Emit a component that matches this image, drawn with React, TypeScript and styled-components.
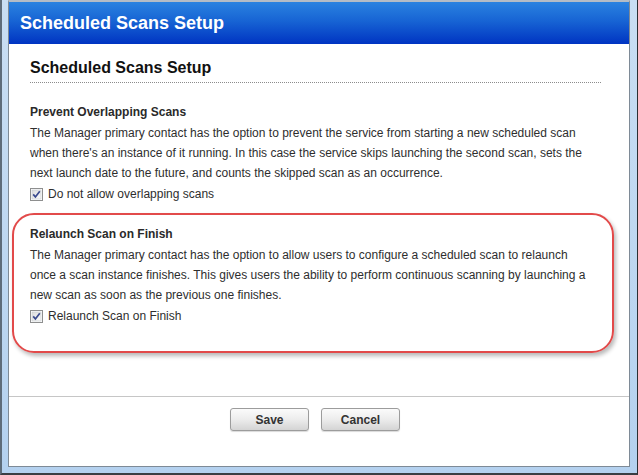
import styled, { createGlobalStyle } from 'styled-components';

const GlobalStyle = createGlobalStyle`
  html, body {
    margin: 0;
    padding: 0;
    background: #ffffff;
  }
  body {
    font-family: "Liberation Sans", Arial, sans-serif;
  }
`;

// window chrome
const Frame = styled.div`
  width: 638px;
  height: 475px;
  box-sizing: border-box;
  background: linear-gradient(to bottom, #c9def3, #b4d1ef);
  border-left: 2px solid #5e6c7a;
  border-right: 1px solid #2c2f33;
  border-bottom: 2px solid #3a3d42;
  padding: 0 7px 6px 6px;
  display: flex;
  flex-direction: column;
`;

const Dialog = styled.div`
  flex: 1;
  display: flex;
  flex-direction: column;
  background: #fff;
  border-top: 2px solid #b3bcc6;
  border-left: 1px solid #7e8a96;
  border-right: 1px solid #7e8a96;
  border-bottom: 1px solid #7e8a96;
`;

const TitleBar = styled.div`
  height: 42px;
  display: flex;
  align-items: center;
  padding-left: 11px;
  background: linear-gradient(to bottom, #2a82e0 0%, #1764d4 45%, #0034c2 100%);
  color: #fff;
  font-size: 18px;
  font-weight: bold;
`;

const Body = styled.div`
  flex: 1;
  padding: 14px 28px 0 21px;
`;

const PageTitle = styled.h2`
  margin: 0;
  font-size: 16px;
  line-height: 20px;
  font-weight: bold;
  color: #111;
  padding-bottom: 4px;
  border-bottom: 1px dotted #8c8c8c;
`;

const Section = styled.div<{ highlight?: boolean }>`
  margin-top: ${({ highlight }) => (highlight ? '9px' : '19px')};
  ${({ highlight }) =>
    highlight &&
    `
    margin-left: -18px;
    margin-right: -13px;
    padding: 9px 12px 25px 16px;
    border: 2px solid #e24a4a;
    border-radius: 22px;
    box-shadow: 2px 3px 4px rgba(0, 0, 0, 0.28);
  `}
`;

const Heading = styled.div`
  font-size: 12px;
  line-height: 20px;
  font-weight: bold;
  color: #2a2a2a;
  margin-bottom: 1px;
`;

const Text = styled.p`
  margin: 0;
  font-size: 12px;
  line-height: 20px;
  color: #2e2e2e;
  white-space: nowrap;
`;

const CheckRow = styled.label`
  display: flex;
  align-items: center;
  gap: 5px;
  height: 20px;
  margin-top: 1px;
  font-size: 12px;
  color: #2e2e2e;
`;

const Footer = styled.div`
  border-top: 1px solid #c6c6c6;
  height: 70px;
  box-sizing: border-box;
  padding: 11px 8px 0 0;
  display: flex;
  justify-content: center;
  gap: 12px;
`;

const Button = styled.button`
  width: 79px;
  height: 23px;
  padding: 0;
  border: 1px solid #9c9c9c;
  border-radius: 3px;
  background: linear-gradient(to bottom, #fbfbfb 0%, #ececec 50%, #d4d4d4 100%);
  box-shadow: 0 1px 1px rgba(0, 0, 0, 0.15);
  font-family: "Liberation Sans", Arial, sans-serif;
  font-size: 12px;
  font-weight: bold;
  color: #333;
`;

function CheckBox() {
  return (
    <svg width="13" height="13" viewBox="0 0 13 13">
      <defs>
        <linearGradient id="cbfill" x1="0" y1="0" x2="1" y2="1">
          <stop offset="0" stopColor="#dcdcdc" />
          <stop offset="1" stopColor="#fbfbfb" />
        </linearGradient>
      </defs>
      <rect x="0.5" y="0.5" width="12" height="12" fill="#fff" stroke="#8e8f8f" />
      <rect x="2" y="2" width="9" height="9" fill="url(#cbfill)" stroke="#c4c8cc" strokeWidth="0.6" />
      <path d="M3.2 6.4 L5.4 8.9 L9.8 3.2" fill="none" stroke="#3a4a8e" strokeWidth="1.7" />
    </svg>
  );
}

export default function App() {
  return (
    <>
      <GlobalStyle />
      <Frame>
        <Dialog>
          <TitleBar>Scheduled Scans Setup</TitleBar>
          <Body>
            <PageTitle>Scheduled Scans Setup</PageTitle>

            <Section>
              <Heading>Prevent Overlapping Scans</Heading>
              <Text>
                The Manager primary contact has the option to prevent the service from starting a new scheduled scan
                <br />
                when there's an instance of it running. In this case the service skips launching the second scan, sets the
                <br />
                next launch date to the future, and counts the skipped scan as an occurrence.
              </Text>
              <CheckRow>
                <CheckBox />
                Do not allow overlapping scans
              </CheckRow>
            </Section>

            <Section highlight>
              <Heading>Relaunch Scan on Finish</Heading>
              <Text>
                The Manager primary contact has the option to allow users to configure a scheduled scan to relaunch
                <br />
                once a scan instance finishes. This gives users the ability to perform continuous scanning by launching a
                <br />
                new scan as soon as the previous one finishes.
              </Text>
              <CheckRow>
                <CheckBox />
                Relaunch Scan on Finish
              </CheckRow>
            </Section>
          </Body>
          <Footer>
            <Button>Save</Button>
            <Button>Cancel</Button>
          </Footer>
        </Dialog>
      </Frame>
    </>
  );
}
